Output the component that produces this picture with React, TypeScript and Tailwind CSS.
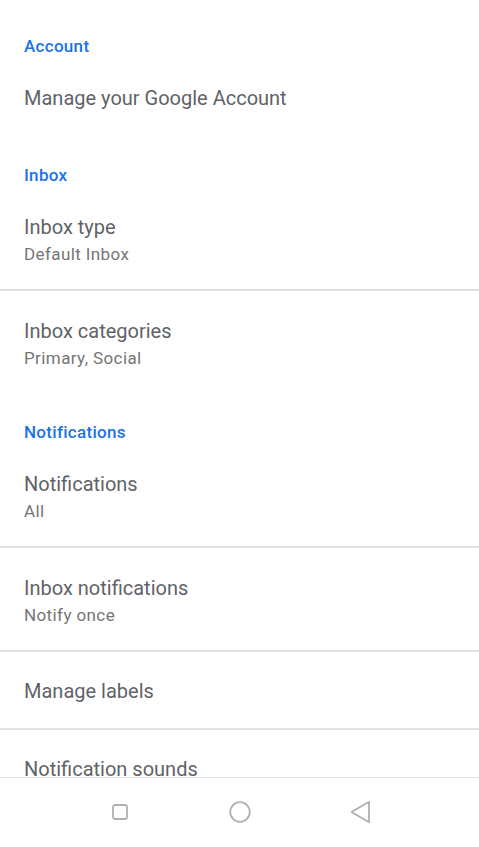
import { Fragment } from 'react';

type Item = { title: string; subtitle?: string };
type Section = { header: string; items: Item[] };

const SECTIONS: Section[] = [
  { header: 'Account', items: [{ title: 'Manage your Google Account' }] },
  {
    header: 'Inbox',
    items: [
      { title: 'Inbox type', subtitle: 'Default Inbox' },
      { title: 'Inbox categories', subtitle: 'Primary, Social' },
    ],
  },
  {
    header: 'Notifications',
    items: [
      { title: 'Notifications', subtitle: 'All' },
      { title: 'Inbox notifications', subtitle: 'Notify once' },
      { title: 'Manage labels' },
      { title: 'Notification sounds' },
    ],
  },
];

function SettingRow({ item, first }: { item: Item; first: boolean }) {
  if (!item.subtitle) {
    return (
      <div className={first ? 'h-[78px] px-6 pt-[28px]' : 'h-[76px] px-6 pt-[27px]'}>
        <div className="text-[20px] leading-[24px] text-[#5f6368]">{item.title}</div>
      </div>
    );
  }
  return (
    <div className="h-[102px] px-6 pt-[28px]">
      <div className="text-[20px] leading-[24px] text-[#5f6368]">{item.title}</div>
      <div className="mt-[4px] text-[17px] leading-[22px] tracking-[0.4px] text-[#757575]">
        {item.subtitle}
      </div>
    </div>
  );
}

export default function App() {
  return (
    <div
      className="h-screen bg-white flex flex-col overflow-hidden"
      style={{ fontFamily: 'Roboto, "Noto Sans", sans-serif' }}
    >
      {/* ── Settings list ─────────────────────────────── */}
      <main className="flex-1 min-h-0 overflow-hidden pt-[7px]">
        {SECTIONS.map((s) => (
          <section key={s.header}>
            <div className="h-[51px] px-6 pt-[28px]">
              <div className="text-[17px] leading-[22px] font-medium tracking-[0.3px] text-[#1a73e8]">
                {s.header}
              </div>
            </div>
            {s.items.map((item, i) => (
              <Fragment key={item.title}>
                {i > 0 && <div className="h-[2px] bg-[#e0e0e0]" />}
                <SettingRow item={item} first={i === 0} />
              </Fragment>
            ))}
          </section>
        ))}
      </main>

      {/* ── System nav bar ────────────────────────────── */}
      <nav className="h-[70px] flex-shrink-0 border-t border-[#e0e0e0] bg-white">
        <div className="mx-auto grid h-full w-[360px] grid-cols-3 place-items-center pb-[1px]">
          <svg width="18" height="18" viewBox="0 0 18 18" className="text-[#b0b0b0]">
          <rect x="2" y="2" width="14" height="14" rx="2" fill="none" stroke="currentColor" strokeWidth="1.8" />
          </svg>
          <svg width="24" height="24" viewBox="0 0 24 24" className="text-[#b0b0b0]">
            <circle cx="12" cy="12" r="9.8" fill="none" stroke="currentColor" strokeWidth="1.8" />
          </svg>
          <svg width="22" height="24" viewBox="0 0 22 24" className="text-[#b0b0b0]">
            <path d="M20 1.8 L2.5 12 L20 22.2 Z" fill="none" stroke="currentColor" strokeWidth="1.8" strokeLinejoin="round" />
          </svg>
        </div>
      </nav>
    </div>
  );
}
